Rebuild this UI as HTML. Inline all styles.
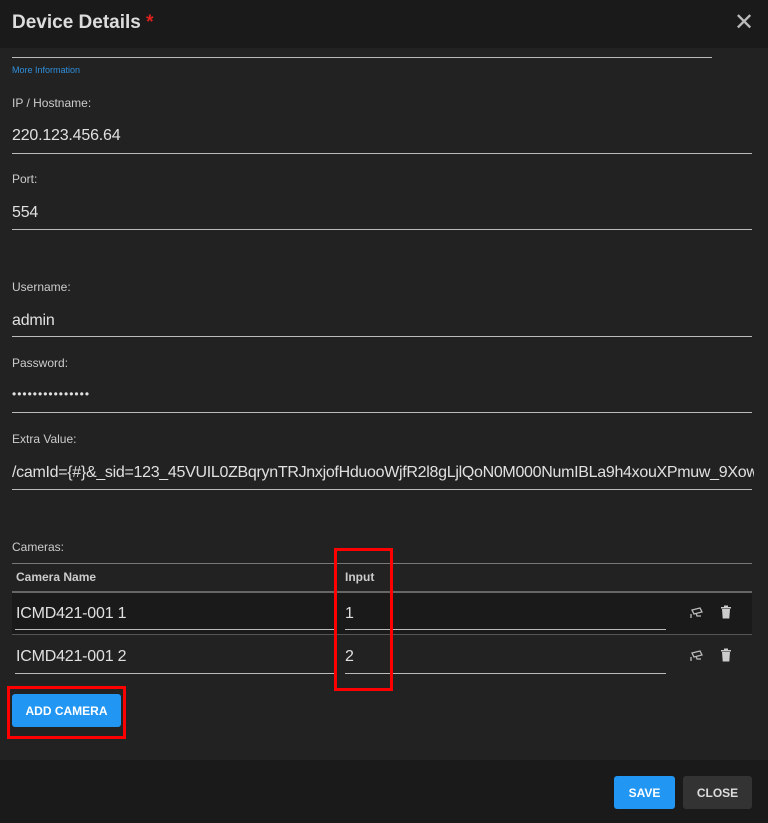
<!DOCTYPE html>
<html><head><style>
*{margin:0;padding:0;box-sizing:border-box}
body{width:768px;height:823px;background:#222;font-family:"Liberation Sans",sans-serif;position:relative;overflow:hidden;color:#ddd}
.a{position:absolute}
.hdr{left:0;top:0;width:768px;height:48px;background:#1a1a1a}
.ftr{left:0;top:760px;width:768px;height:63px;background:#1a1a1a}
.lbl{font-size:12px;color:#ccc}
.val{font-size:16px;color:#e0e0e0;letter-spacing:-0.2px}
.ln{height:1px;background:#bbb}
.btn{border-radius:3px;font-size:12px;font-weight:bold;color:#fff;display:flex;align-items:center;justify-content:center}
.red{border:3px solid #f00}
</style></head><body>
<div class="a hdr"></div>
<div class="a" style="left:12px;top:12px;font-size:19px;font-weight:bold;color:#ddd">Device Details <span style="color:#e0201c">*</span></div>
<div class="a" style="left:734px;top:8px;font-size:24px;color:#bbb">✕</div>
<div class="a ln" style="left:12px;top:57px;width:700px"></div>
<div class="a" style="left:12px;top:65px;font-size:9px;color:#2f8fdc">More Information</div>
<div class="a lbl" style="left:12px;top:96px">IP / Hostname:</div>
<div class="a val" style="left:12px;top:127px">220.123.456.64</div>
<div class="a ln" style="left:12px;top:153px;width:740px"></div>
<div class="a lbl" style="left:12px;top:172px">Port:</div>
<div class="a val" style="left:12px;top:204px">554</div>
<div class="a ln" style="left:12px;top:229px;width:740px"></div>
<div class="a lbl" style="left:12px;top:280px">Username:</div>
<div class="a val" style="left:12px;top:312px">admin</div>
<div class="a ln" style="left:12px;top:336px;width:740px"></div>
<div class="a lbl" style="left:12px;top:356px">Password:</div>
<div class="a" style="left:12px;top:387px;font-size:12px;letter-spacing:1px;color:#e0e0e0">•••••••••••••••</div>
<div class="a ln" style="left:12px;top:412px;width:740px"></div>
<div class="a lbl" style="left:12px;top:432px">Extra Value:</div>
<div class="a val" style="left:12px;top:464px;white-space:nowrap;width:742px;overflow:hidden;font-size:16px;letter-spacing:-0.3px">/camId={#}&amp;_sid=123_45VUIL0ZBqrynTRJnxjofHduooWjfR2l8gLjlQoN0M000NumIBLa9h4xouXPmuw_9Xow</div>
<div class="a ln" style="left:12px;top:489px;width:740px"></div>
<div class="a lbl" style="left:12px;top:540px">Cameras:</div>
<div class="a" style="left:12px;top:563px;width:740px;height:1px;background:#777"></div>
<div class="a" style="left:16px;top:570px;font-size:12px;font-weight:bold;color:#ccc">Camera Name</div>
<div class="a" style="left:345px;top:570px;font-size:12px;font-weight:bold;color:#ccc">Input</div>
<div class="a" style="left:12px;top:591px;width:740px;height:2px;background:#666"></div>
<div class="a" style="left:12px;top:593px;width:740px;height:41px;background:#1a1a1a"></div>
<div class="a" style="left:12px;top:634px;width:740px;height:1px;background:#555"></div>
<div class="a val" style="left:16px;top:605px">ICMD421-001 1</div>
<div class="a val" style="left:345px;top:605px">1</div>
<div class="a ln" style="left:15px;top:629px;width:320px"></div>
<div class="a ln" style="left:345px;top:629px;width:321px"></div>
<div class="a val" style="left:16px;top:648px">ICMD421-001 2</div>
<div class="a val" style="left:345px;top:648px">2</div>
<div class="a ln" style="left:15px;top:673px;width:320px"></div>
<div class="a ln" style="left:345px;top:673px;width:321px"></div>
<svg class="a" style="left:690px;top:606px" width="14" height="14" viewBox="0 0 14 14" fill="none" stroke="#bbb" stroke-width="1.3"><path d="M2 4l8-2 2 4-8 2z M6 7l1 3h4 M1 8v4"/></svg>
<svg class="a" style="left:720px;top:605px" width="12" height="14" viewBox="0 0 12 14" fill="#ccc"><path d="M1 2h10v1.5H1zM4 0.5h4v1.5H4zM2 4h8l-0.7 9.5H2.7z"/></svg>
<svg class="a" style="left:690px;top:649px" width="14" height="14" viewBox="0 0 14 14" fill="none" stroke="#bbb" stroke-width="1.3"><path d="M2 4l8-2 2 4-8 2z M6 7l1 3h4 M1 8v4"/></svg>
<svg class="a" style="left:720px;top:648px" width="12" height="14" viewBox="0 0 12 14" fill="#ccc"><path d="M1 2h10v1.5H1zM4 0.5h4v1.5H4zM2 4h8l-0.7 9.5H2.7z"/></svg>
<div class="a btn" style="left:12px;top:694px;width:109px;height:33px;background:#2196f3">ADD CAMERA</div>
<div class="a red" style="left:334px;top:548px;width:59px;height:143px"></div>
<div class="a red" style="left:7px;top:686px;width:119px;height:53px"></div>
<div class="a ftr"></div>
<div class="a btn" style="left:614px;top:776px;width:61px;height:33px;background:#2196f3">SAVE</div>
<div class="a btn" style="left:683px;top:776px;width:69px;height:33px;background:#333;color:#ddd">CLOSE</div>
</body></html>
